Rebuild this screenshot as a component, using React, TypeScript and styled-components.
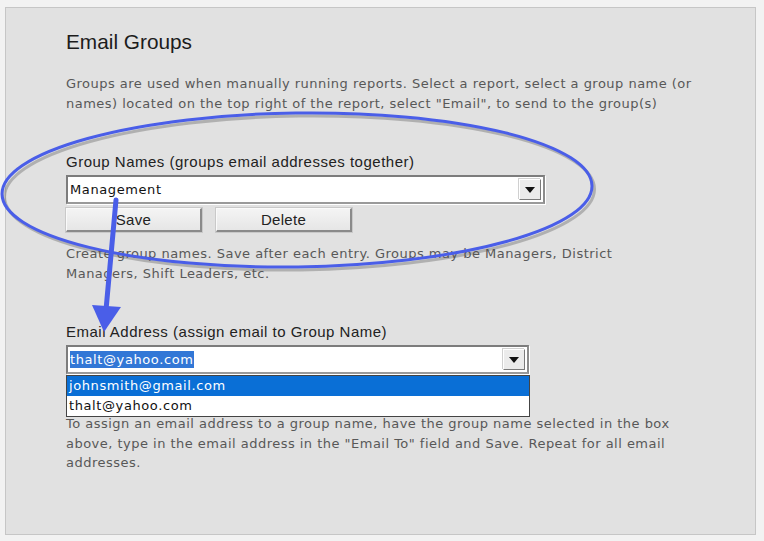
import * as React from "react";
import styled, { createGlobalStyle } from "styled-components";

const GlobalStyle = createGlobalStyle`
  html, body {
    margin: 0;
    padding: 0;
    background: #f2f2f2;
  }
`;

const Page = styled.div`
  position: relative;
  width: 764px;
  height: 541px;
  padding: 7px 8px 6px 5px;
  box-sizing: border-box;
  overflow: hidden;
`;

const Panel = styled.div`
  height: 100%;
  box-sizing: border-box;
  background: #e1e1e1;
  border: 1px solid #c6c6c6;
  padding: 22px 0 0 60px;
`;

const Title = styled.h1`
  margin: 0;
  font-family: "Liberation Sans", Arial, sans-serif;
  font-weight: normal;
  font-size: 20.8px;
  line-height: 24px;
  color: #1c1c1c;
`;

const Help = styled.p<{ $top: number }>`
  position: relative;
  margin: ${(p) => p.$top}px 0 0 0;
  font-family: "DejaVu Sans", Verdana, sans-serif;
  font-size: 13px;
  letter-spacing: 0.48px;
  line-height: 19.5px;
  color: #585858;
  white-space: nowrap;
`;

const Label = styled.div<{ $top: number }>`
  margin-top: ${(p) => p.$top}px;
  font-family: "Liberation Sans", Arial, sans-serif;
  font-size: 15px;
  letter-spacing: 0.5px;
  line-height: 17px;
  color: #222;
`;

const SelectBox = styled.div<{ $width: number }>`
  display: flex;
  align-items: center;
  width: ${(p) => p.$width}px;
  height: 29px;
  margin-top: 5px;
  box-sizing: border-box;
  background: #fff;
  border: 2px solid #7c7c7c;
  border-right-color: #8c8c8c;
  border-bottom-color: #9a9a9a;
  box-shadow: 1px 1px 0 #fff;
  padding: 0 2px 0 2px;
`;

const SelectText = styled.span<{ $selected?: boolean }>`
  flex: 1;
  font-family: "DejaVu Sans", Verdana, sans-serif;
  font-size: 13px;
  letter-spacing: 0.6px;
  color: #111;
  span {
    padding: 1px 0;
    background: ${(p) => (p.$selected ? "#3277d6" : "transparent")};
    color: ${(p) => (p.$selected ? "#fff" : "#111")};
  }
`;

const ArrowButton = styled.div`
  width: 22px;
  height: 21px;
  box-sizing: border-box;
  display: flex;
  align-items: center;
  justify-content: center;
  background: #ebebeb;
  border: 1px solid #fff;
  border-right-color: #7a7a7a;
  border-bottom-color: #7a7a7a;
  box-shadow: -1px -1px 0 #d0d0d0;
  &::after {
    content: "";
    width: 0;
    height: 0;
    border-left: 5px solid transparent;
    border-right: 5px solid transparent;
    border-top: 6px solid #111;
  }
`;

const ButtonRow = styled.div`
  display: flex;
  gap: 14px;
  margin-top: 4px;
`;

const Button = styled.button`
  width: 136px;
  height: 24px;
  padding: 0;
  font-family: "Liberation Sans", Arial, sans-serif;
  font-size: 15px;
  letter-spacing: 0.3px;
  color: #222;
  background: linear-gradient(#f4f4f4, #e6e6e6);
  border: 1px solid #fafafa;
  border-right: 2px solid #8a8a8a;
  border-bottom: 2px solid #8a8a8a;
  box-shadow: 0 0 0 1px #c9c9c9;
`;

const ListBox = styled.div`
  position: relative;
  z-index: 1;
  width: 464px;
  margin-top: 1px;
  box-sizing: border-box;
  background: #fff;
  border: 1px solid #444;
`;

const Option = styled.div<{ $active?: boolean }>`
  height: 20px;
  line-height: 20px;
  padding-left: 2px;
  font-family: "DejaVu Sans", Verdana, sans-serif;
  font-size: 13px;
  letter-spacing: 0.6px;
  background: ${(p) => (p.$active ? "#0a6fd6" : "#fff")};
  color: ${(p) => (p.$active ? "#fff" : "#111")};
`;

const Overlay = styled.svg`
  position: absolute;
  left: 0;
  top: 0;
  z-index: 2;
  pointer-events: none;
`;

function Annotation() {
  return (
    <Overlay width={764} height={541} viewBox="0 0 764 541">
      <ellipse
        cx={298}
        cy={191}
        rx={295}
        ry={77}
        fill="none"
        stroke="#555"
        strokeOpacity={0.35}
        strokeWidth={3}
        transform="translate(1.5 2) rotate(-0.8 297 190)"
      />
      <ellipse
        cx={297}
        cy={190}
        rx={295}
        ry={77}
        fill="none"
        stroke="#4a5ee8"
        strokeWidth={3}
        transform="rotate(-0.8 297 190)"
      />
      <line
        x1={116}
        y1={200}
        x2={106}
        y2={310}
        stroke="#4a5ee8"
        strokeWidth={5}
        strokeLinecap="round"
      />
      <polygon points="92,305 121,307 104,332" fill="#4a5ee8" />
    </Overlay>
  );
}

export default function App() {
  return (
    <>
      <GlobalStyle />
      <Page>
        <Panel>
          <Title>Email Groups</Title>
          <Help $top={20}>
            Groups are used when manually running reports. Select a report,
            select a group name (or
            <br />
            names) located on the top right of the report, select "Email", to
            send to the group(s)
          </Help>
          <Label $top={40}>Group Names (groups email addresses together)</Label>
          <SelectBox $width={479}>
            <SelectText>Management</SelectText>
            <ArrowButton />
          </SelectBox>
          <ButtonRow>
            <Button>Save</Button>
            <Button>Delete</Button>
          </ButtonRow>
          <Help $top={12}>
            Create group names. Save after each entry. Groups may be Managers,
            District
            <br />
            Managers, Shift Leaders, etc.
          </Help>
          <Label $top={40}>Email Address (assign email to Group Name)</Label>
          <SelectBox $width={463}>
            <SelectText $selected>
              <span>thalt@yahoo.com</span>
            </SelectText>
            <ArrowButton />
          </SelectBox>
          <ListBox>
            <Option $active>johnsmith@gmail.com</Option>
            <Option>thalt@yahoo.com</Option>
          </ListBox>
          <Help $top={-3}>
            To assign an email address to a group name, have the group name
            selected in the box
            <br />
            above, type in the email address in the "Email To" field and Save.
            Repeat for all email
            <br />
            addresses.
          </Help>
        </Panel>
        <Annotation />
      </Page>
    </>
  );
}
